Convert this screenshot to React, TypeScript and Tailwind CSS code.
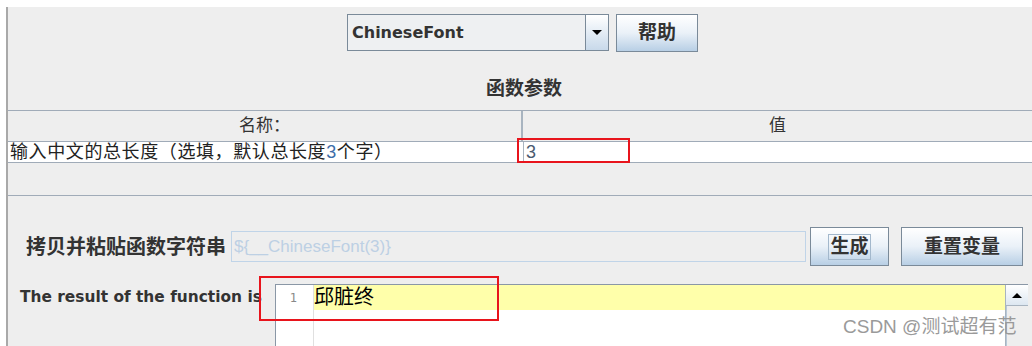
import React from 'react';

const cjk = "font-['Liberation_Sans','Noto_Sans_CJK_SC',sans-serif]";

const SwingButton: React.FC<{ label: string; className?: string; focused?: boolean }> = ({ label, className = '', focused }) => (
  <div
    className={`flex items-center justify-center border border-[#7a8a99] bg-gradient-to-b from-white via-[#eaf1f8] to-[#b8cfe5] text-[19px] font-bold text-[#333] ${className}`}
  >
    <span className={focused ? 'border border-[#a3b8cc] px-[1px] leading-[24px]' : 'leading-[24px]'}>{label}</span>
  </div>
);

export default function App() {
  return (
    <div className={`relative h-[346px] w-[1032px] overflow-hidden bg-white ${cjk}`}>
      <div className="ml-[6px] mt-[7px] flex h-[339px] flex-col border-l-2 border-[#a9a9a9] bg-[#eeeeee]">
        {/* function selector */}
        <div className="flex items-start gap-[7px] pl-[339px] pt-[7px]">
          <div className="flex h-[37px] w-[262px] border border-[#7a8a99] bg-[#eef0f2]">
            <div className="flex flex-1 items-center pl-[4px] font-['DejaVu_Sans',sans-serif] text-[16px] font-bold text-[#333]">
              ChineseFont
            </div>
            <div className="flex w-[23px] items-center justify-center border-l border-[#7a8a99] bg-gradient-to-b from-white to-[#c8d9ea]">
              <div className="h-0 w-0 border-x-[5px] border-t-[5px] border-x-transparent border-t-black" />
            </div>
          </div>
          <SwingButton label="帮助" className="h-[38px] w-[82px]" />
        </div>

        <div className="mt-[25px] pl-[8px] text-center text-[19px] font-bold leading-[24px] text-[#333]">函数参数</div>

        {/* parameters table */}
        <div className="mt-[9px] flex h-[86px] flex-col border-b border-t border-[#a0abb8]">
          <div className="flex h-[31px] border-b border-[#a0abb8] text-[17px] text-[#333]">
            <div className="flex w-[515px] items-center justify-center border-r-2 border-[#a8b4c0]">名称：</div>
            <div className="flex flex-1 items-center justify-center">值</div>
          </div>
          <div className="flex h-[21px] border-b border-[#a0abb8] bg-white text-[18px] leading-[20px] text-[#222]">
            <div className="w-[515px] whitespace-nowrap pl-[2px] tracking-[0.6px]">
              输入中文的总长度（选填，默认总长度<span className="text-[#3c6da8]">3</span>个字）
            </div>
            <div className="flex-1 border-l border-[#a8b4c0] pl-[2px] text-[#4a5a70]">3</div>
          </div>
        </div>

        {/* copy row */}
        <div className="mt-[31px] flex items-center">
          <div className="w-[223px] whitespace-nowrap pl-[18px] text-[20px] font-bold text-[#333]">拷贝并粘贴函数字符串</div>
          <div className="flex h-[31px] w-[575px] items-center border border-[#c0d4e8] pl-[2px] font-['Liberation_Sans',sans-serif] text-[17px] text-[#bdd0e4]">
            {'${__ChineseFont(3)}'}
          </div>
          <SwingButton label="生成" focused className="ml-[4px] h-[39px] w-[79px]" />
          <SwingButton label="重置变量" className="ml-[12px] h-[39px] w-[122px]" />
        </div>

        {/* result */}
        <div className="mt-[18px] flex flex-1 items-start">
          <div className="w-[267px] whitespace-nowrap pl-[12px] pt-[1px] font-['DejaVu_Sans',sans-serif] text-[15.4px] font-bold leading-[24px] text-[#333]">
            The result of the function is
          </div>
          <div className="flex h-full w-[753px] border-l border-t border-[#8a97a6] bg-white">
            <div className="w-[38px] border-r border-[#e0e0e0] pr-[16px] pt-[4px] text-right font-['DejaVu_Sans_Mono',monospace] text-[12px] text-[#888]">
              1
            </div>
            <div className="flex-1">
              <div className="h-[25px] bg-[#ffffaa] text-[20px] leading-[24px] text-black">邱脏终</div>
            </div>
            <div className="flex w-[23px] flex-col border-l border-[#a8b4c0] bg-[#eeeeee]">
              <div className="flex h-[21px] items-center justify-center border-b border-[#a8b4c0] bg-gradient-to-b from-white to-[#dde7f1]">
                <div className="h-0 w-0 border-x-[5px] border-b-[5px] border-x-transparent border-b-black" />
              </div>
              <div className="flex-1 border-l border-[#b8c8d8]" />
            </div>
          </div>
        </div>
      </div>

      {/* annotation boxes */}
      <div className="absolute left-[517px] top-[138px] h-[25px] w-[113px] border-2 border-[#e8141c]" />
      <div className="absolute left-[259px] top-[276px] h-[45px] w-[240px] border-2 border-[#e8141c]" />

      <div className="absolute left-[843px] top-[314px] text-[19px] leading-[26px] text-[#9a9a9a]">CSDN @测试超有范</div>
    </div>
  );
}
